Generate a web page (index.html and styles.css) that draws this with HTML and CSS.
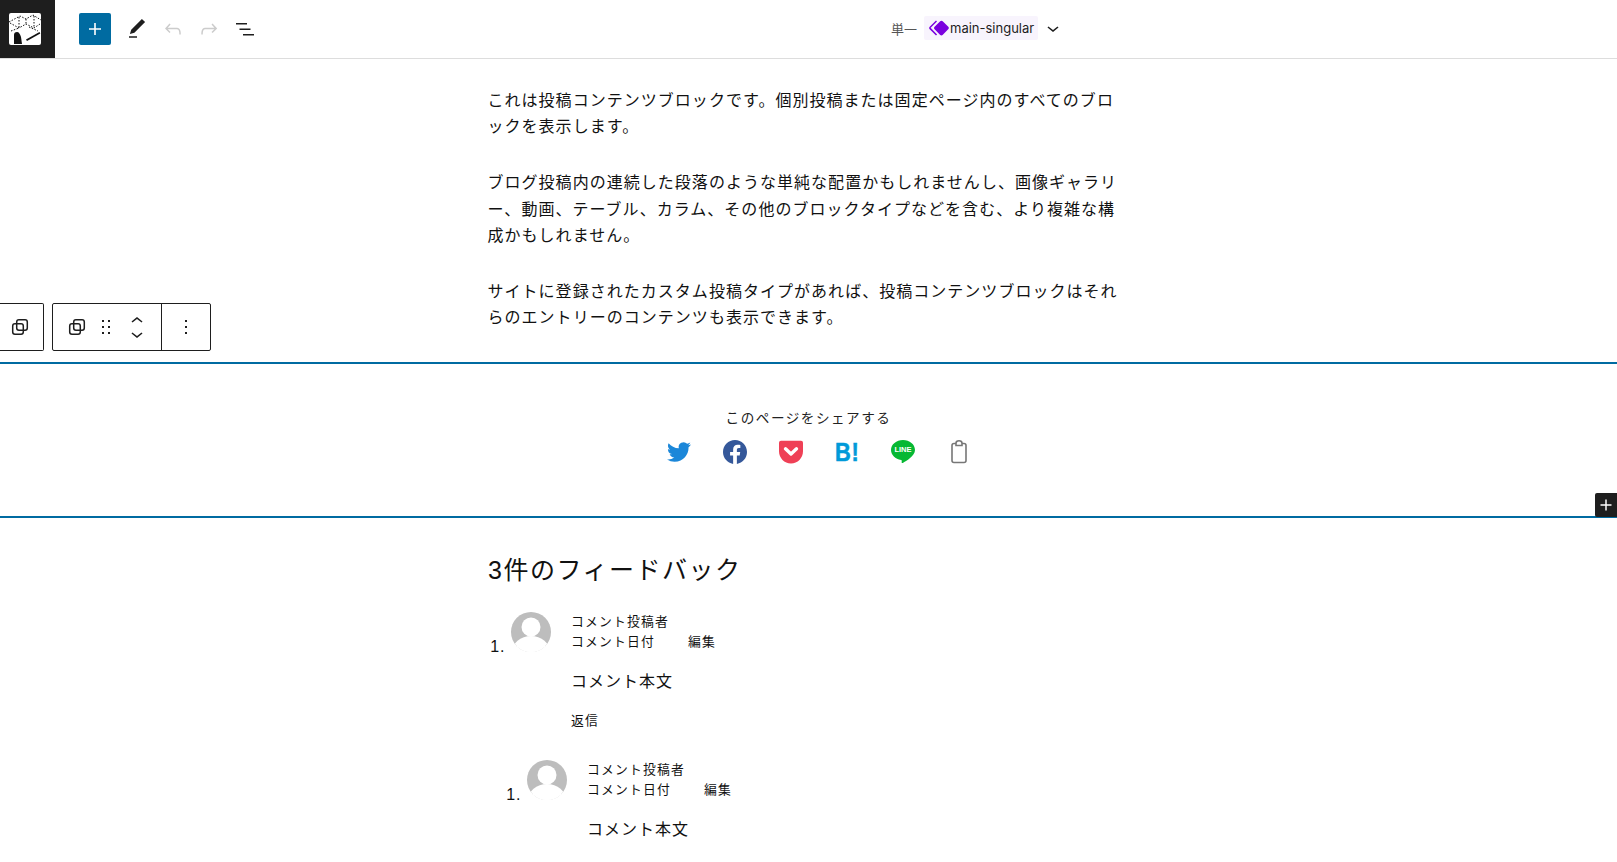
FILE: index.html
```html
<!DOCTYPE html>
<html lang="ja">
<head>
  <meta charset="UTF-8" />
  <title>単一 main-singular</title>
  <link rel="stylesheet" href="styles.css">
</head>
<body>
  <header class="topbar">
    <a class="site-logo" href="#">
      <svg width="32" height="32" viewBox="0 0 32 32">
        <rect width="32" height="32" rx="2" fill="#fff"/>
        <path d="M0 9l11-6 6 3 7-4 8 5M1 10l9 5 7-4 8 4 6-4M10 4v11M17 6v5M25 3v12M2 18l8-3M20 14l9 4" fill="none" stroke="#111" stroke-width="1" stroke-dasharray="1.5 1.5"/>
        <path d="M5 31V22c0-2 1-3 3-3s3 2 4 5l1 7z" fill="#111"/>
        <path d="M17 26.5l13.5-7.5.8 1.4L18 28z" fill="#111"/>
      </svg>
    </a>
    <div class="tools">
      <button class="tool tool-add"><svg viewBox="0 0 24 24" width="24" height="24"><path d="M18 11.2h-5.2V6h-1.6v5.2H6v1.6h5.2V18h1.6v-5.2H18z"/></svg></button>
      <button class="tool"><svg viewBox="0 0 24 24" width="24" height="24"><path d="M20.1 5.1L16.9 2 6.2 12.7l-1.3 4.4 4.5-1.3L20.1 5.1zM4 20.8h8v-1.5H4v1.5z"/></svg></button>
      <button class="tool tool-off"><svg viewBox="0 0 24 24" width="24" height="24"><path d="M18.3 11.7c-.6-.6-1.4-.9-2.3-.9H6.7l2.9-3.3-1.1-1-4.5 5L8.5 16l1-1-2.7-2.7H16c.5 0 .9.2 1.3.5 1 1 1 3.4 1 4.5v.3h1.5v-.2c0-1.5 0-4.3-1.5-5.7z"/></svg></button>
      <button class="tool tool-off"><svg viewBox="0 0 24 24" width="24" height="24"><path d="M15.6 6.5l-1.1 1 2.9 3.3H8c-.9 0-1.7.3-2.3.9-1.4 1.5-1.4 4.2-1.4 5.6v.2h1.5v-.3c0-1.1 0-3.5 1-4.5.3-.3.7-.5 1.3-.5h9.2L14.5 15l1.1 1.1 4.6-4.6-4.6-5z"/></svg></button>
      <button class="tool"><svg viewBox="0 0 24 24" width="24" height="24"><path d="M3 6h11v1.5H3V6zm3.5 5.5h11V13h-11v-1.5zM21 17H10v1.5h11V17z"/></svg></button>
    </div>
    <div class="doc-title">
      <span class="doc-type">単一</span>
      <span class="doc-badge">
        <svg viewBox="0 0 24 24" width="24" height="24"><path d="M21.3 10.8l-5.6-5.6c-.7-.7-1.8-.7-2.5 0l-5.6 5.6c-.7.7-.7 1.8 0 2.5l5.6 5.6c.3.3.8.5 1.2.5s.9-.2 1.2-.5l5.6-5.6c.8-.7.8-1.9.1-2.5z"/><path d="M3.7 11.8L10 5.5l-1-1-6.3 6.3c-.7.7-.7 1.8 0 2.5L9 19.5l1.1-1.1-6.3-6.3c-.2 0-.2-.2-.1-.3z"/></svg>
        main-singular
      </span>
      <svg class="doc-chevron" viewBox="0 0 24 24" width="24" height="24"><path d="M17.5 11.6L12 16l-5.5-4.4.9-1.2L12 14l4.5-3.6 1 1.2z"/></svg>
    </div>
  </header>

  <main class="canvas">
    <section class="post-content">
      <p>これは投稿コンテンツブロックです。個別投稿または固定ページ内のすべてのブロックを表示します。</p>
      <p>ブログ投稿内の連続した段落のような単純な配置かもしれませんし、画像ギャラリー、動画、テーブル、カラム、その他のブロックタイプなどを含む、より複雑な構成かもしれません。</p>
      <p>サイトに登録されたカスタム投稿タイプがあれば、投稿コンテンツブロックはそれらのエントリーのコンテンツも表示できます。</p>
    </section>

    <section class="share">
      <div class="block-toolbar">
        <div class="toolbar-group group-cut">
          <svg viewBox="0 0 24 24" width="24" height="24"><rect x="4.7" y="8.7" width="10.6" height="10.6" rx="2.2"/><rect x="8.7" y="4.7" width="10.6" height="10.6" rx="2.2"/></svg>
        </div>
        <div class="toolbar-group">
          <div class="toolbar-cell cell-main">
            <svg viewBox="0 0 24 24" width="24" height="24"><rect x="4.7" y="8.7" width="10.6" height="10.6" rx="2.2"/><rect x="8.7" y="4.7" width="10.6" height="10.6" rx="2.2"/></svg>
            <svg class="solid" viewBox="0 0 24 24" width="24" height="24"><path d="M8 7h2V5H8v2zm0 6h2v-2H8v2zm0 6h2v-2H8v2zm6-14v2h2V5h-2zm0 8h2v-2h-2v2zm0 6h2v-2h-2v2z"/></svg>
            <span class="movers">
              <svg class="solid" viewBox="0 0 24 24" width="24" height="24"><path d="M6.5 12.4L12 8l5.5 4.4-.9 1.2L12 10l-4.5 3.6-1-1.2z"/></svg>
              <svg class="solid" viewBox="0 0 24 24" width="24" height="24"><path d="M17.5 11.6L12 16l-5.5-4.4.9-1.2L12 14l4.5-3.6 1 1.2z"/></svg>
            </span>
          </div>
          <div class="toolbar-cell cell-more">
            <svg class="solid" viewBox="0 0 24 24" width="24" height="24"><path d="M13 19h-2v-2h2v2zm0-6h-2v-2h2v2zm0-6h-2V5h2v2z"/></svg>
          </div>
        </div>
      </div>

      <p class="share-title">このページをシェアする</p>
      <ul class="share-list">
        <li>
          <svg viewBox="0 0 24 24" width="24" height="24" fill="#1b87d9"><path d="M23.953 4.57a10 10 0 01-2.825.775 4.958 4.958 0 002.163-2.723c-.951.555-2.005.959-3.127 1.184a4.92 4.92 0 00-8.384 4.482C7.69 8.095 4.067 6.13 1.64 3.162a4.822 4.822 0 00-.666 2.475c0 1.71.87 3.213 2.188 4.096a4.904 4.904 0 01-2.228-.616v.06a4.923 4.923 0 003.946 4.827 4.996 4.996 0 01-2.212.085 4.936 4.936 0 004.604 3.417 9.867 9.867 0 01-6.102 2.105c-.39 0-.779-.023-1.17-.067a13.995 13.995 0 007.557 2.209c9.053 0 13.998-7.496 13.998-13.985 0-.21 0-.42-.015-.63A9.935 9.935 0 0024 4.59z"/></svg>
        </li>
        <li>
          <svg viewBox="0 0 24 24" width="24" height="24" fill="#35589a"><path d="M24 12.073c0-6.627-5.373-12-12-12s-12 5.373-12 12c0 5.99 4.388 10.954 10.125 11.854v-8.385H7.078v-3.47h3.047V9.43c0-3.007 1.792-4.669 4.533-4.669 1.312 0 2.686.235 2.686.235v2.953H15.83c-1.491 0-1.956.925-1.956 1.874v2.25h3.328l-.532 3.47h-2.796v8.385C19.612 23.027 24 18.062 24 12.073z"/></svg>
        </li>
        <li>
          <svg viewBox="0 0 24 24" width="24" height="24"><path d="M2 .8h20a2 2 0 012 2v8.4C24 18 18.6 23.4 12 23.4S0 18 0 11.2V2.8a2 2 0 012-2z" fill="#ef4056"/><path d="M6.5 8.8L12 14l5.5-5.2" fill="none" stroke="#fff" stroke-width="3.4" stroke-linecap="round" stroke-linejoin="round"/></svg>
        </li>
        <li class="hatena"><span>B!</span></li>
        <li class="line-icon">
          <svg viewBox="0 0 24 24" width="24" height="24"><path d="M12 0C5.4 0 0 4.4 0 10c0 5 4.3 9.1 10.1 9.9.9.2.7 1 .5 2.4-.1.7.3 1.1 1.3.6 3-1.700 12.100-7 12.100-12.900C24 4.400 18.600 0 12 0z" fill="#06b833"/></svg>
          <span>LINE</span>
        </li>
        <li>
          <svg viewBox="0 0 24 24" width="24" height="24" fill="none" stroke="#777" stroke-width="1.6"><rect x="5" y="3.5" width="14" height="19" rx="2"/><path d="M9 5.5V3.2a3 2.4 0 016 0v2.300z" fill="#fff"/></svg>
        </li>
      </ul>
      <button class="inserter"><svg viewBox="0 0 24 24" width="24" height="24"><path d="M18 11.2h-5.2V6h-1.6v5.2H6v1.6h5.2V18h1.6v-5.2H18z"/></svg></button>
    </section>

    <section class="comments">
      <h2>3件のフィードバック</h2>
      <ol class="comment-list">
        <li>
          <article class="comment">
            <svg class="avatar" viewBox="0 0 40 40" width="40" height="40"><defs><clipPath id="round"><circle cx="20" cy="20" r="20"/></clipPath></defs><g clip-path="url(#round)"><rect width="40" height="40" fill="#bdbdbd"/><circle cx="20" cy="15" r="9.5" fill="#fff"/><ellipse cx="20" cy="40" rx="19" ry="16" fill="#fff"/><rect y="34" width="40" height="6" fill="#fff"/></g></svg>
            <div class="comment-body">
              <p class="meta">コメント投稿者</p>
              <p class="meta meta-row"><span>コメント日付</span><span>編集</span></p>
              <p class="text">コメント本文</p>
              <p class="meta reply">返信</p>
            </div>
          </article>
          <ol class="comment-list nested">
            <li>
              <article class="comment">
                <svg class="avatar" viewBox="0 0 40 40" width="40" height="40"><g clip-path="url(#round)"><rect width="40" height="40" fill="#bdbdbd"/><circle cx="20" cy="15" r="9.5" fill="#fff"/><ellipse cx="20" cy="40" rx="19" ry="16" fill="#fff"/><rect y="34" width="40" height="6" fill="#fff"/></g></svg>
                <div class="comment-body">
                  <p class="meta">コメント投稿者</p>
                  <p class="meta meta-row"><span>コメント日付</span><span>編集</span></p>
                  <p class="text">コメント本文</p>
                </div>
              </article>
            </li>
          </ol>
        </li>
      </ol>
    </section>
  </main>
</body>
</html>
```

FILE: styles.css
```css
* { box-sizing: border-box; }
html, body { height: 100%; }
body {
  margin: 0;
  overflow: hidden;
  background: #fff;
  color: #111;
  font-family: "Liberation Sans", "Noto Sans CJK JP", sans-serif;
  font-size: 16px;
}
p { margin: 0; }
svg { display: block; }
button { border: none; background: none; padding: 0; }

/* top bar */
.topbar {
  position: relative;
  display: flex;
  align-items: center;
  height: 59px;
  border-bottom: 1px solid #ddd;
}
.site-logo {
  display: flex;
  align-items: center;
  width: 55px;
  height: 58px;
  padding-left: 9px;
  background: #1e1e1e;
}
.tools {
  display: flex;
  align-items: center;
  margin-left: 24px;
  gap: 4px;
}
.tool {
  display: flex;
  align-items: center;
  justify-content: center;
  width: 32px;
  height: 32px;
  fill: #1e1e1e;
}
.tool-add {
  margin-right: 6px;
  background: #006ba1;
  border-radius: 2px;
  fill: #fff;
}
.tool-off { fill: #ccc; }
.doc-title {
  position: absolute;
  left: 891px;
  top: -1px;
  height: 58px;
  display: flex;
  align-items: center;
  font-family: Inter, "Noto Sans CJK JP", sans-serif;
  font-size: 13px;
  color: #1e1e1e;
}
.doc-type { color: #555; }
.doc-badge {
  display: flex;
  align-items: center;
  height: 24px;
  margin-left: 7px;
  padding: 0 4px 0 3px;
  background: #f8f4fd;
  border-radius: 2px;
  fill: #7a00df;
}
.doc-badge svg { margin-right: -1px; }
.doc-chevron { margin-left: 3px; fill: #1e1e1e; }

/* page blocks */
.post-content {
  width: 632px;
  margin: 0 auto 0 487.5px;
  padding-top: 29px;
  height: 303px;
  line-height: 26.24px;
  letter-spacing: 1.03px;
}
.post-content p { margin-bottom: 30px; }

.share {
  position: relative;
  height: 156px;
  border-top: 2px solid #006ba1;
  border-bottom: 2px solid #006ba1;
  padding-top: 44px;
}
.share-title {
  text-align: center;
  font-size: 13.6px;
  line-height: 22px;
  letter-spacing: 1.5px;
  color: #222;
}
.share-list {
  display: flex;
  justify-content: center;
  gap: 32px;
  list-style: none;
  margin: 10px 0 0;
  padding: 0 0 0 21px;
}
.share-list li {
  position: relative;
  width: 24px;
  height: 24px;
}
.hatena span {
  display: block;
  color: #009ad9;
  font: bold 26px/24px "Liberation Sans", sans-serif;
  letter-spacing: 1px;
  -webkit-text-stroke: .6px #009ad9;
  transform: scaleX(.84);
  transform-origin: left center;
}
.line-icon span {
  position: absolute;
  left: 0;
  top: 5px;
  width: 24px;
  text-align: center;
  color: #fff;
  font: bold 7.5px/9px "Liberation Sans", sans-serif;
}

.block-toolbar {
  position: absolute;
  left: 0;
  top: -61px;
  display: flex;
  gap: 8px;
  background: #fff;
}
.toolbar-group {
  display: flex;
  height: 48px;
  border: 1px solid #1e1e1e;
  border-radius: 2px;
  background: #fff;
}
.toolbar-group svg { fill: none; stroke: #1e1e1e; stroke-width: 1.5; }
.toolbar-group svg.solid { fill: #1e1e1e; stroke: none; }
.group-cut {
  width: 44px;
  border-left: none;
  border-radius: 0 2px 2px 0;
  align-items: center;
  justify-content: center;
  padding-right: 4px;
}
.toolbar-cell { display: flex; align-items: center; justify-content: center; }
.cell-main { width: 108px; justify-content: flex-start; gap: 5px; padding-left: 12px; }
.cell-more { width: 49px; border-left: 1px solid #1e1e1e; }
.movers { display: flex; flex-direction: column; margin-left: 2px; }
.movers svg + svg { margin-top: -11px; }

.inserter {
  position: absolute;
  right: 0;
  bottom: -1px;
  display: flex;
  align-items: center;
  justify-content: center;
  width: 22px;
  height: 24px;
  background: #1e1e1e;
  border-radius: 2px 0 0 2px;
  fill: #fff;
}

/* comments */
.comments {
  width: 630px;
  margin-left: 488px;
  padding-top: 33px;
}
.comments h2 {
  margin: 0 0 23px;
  font-size: 25px;
  font-weight: 400;
  line-height: 38px;
  letter-spacing: 1.5px;
}
.comment-list {
  margin: 0;
  padding: 0 0 0 23px;
  letter-spacing: 1px;
}
.comment-list.nested { margin-top: 29px; padding-left: 16px; }
.comment {
  display: flex;
  gap: 20px;
  align-items: flex-start;
}
.meta {
  font-size: 12.8px;
  line-height: 20px;
  letter-spacing: 1.2px;
}
.meta-row { display: flex; gap: 33px; }
.text { margin-top: 17px; line-height: 26px; letter-spacing: 1px; }
.reply { margin-top: 16px; }
```
